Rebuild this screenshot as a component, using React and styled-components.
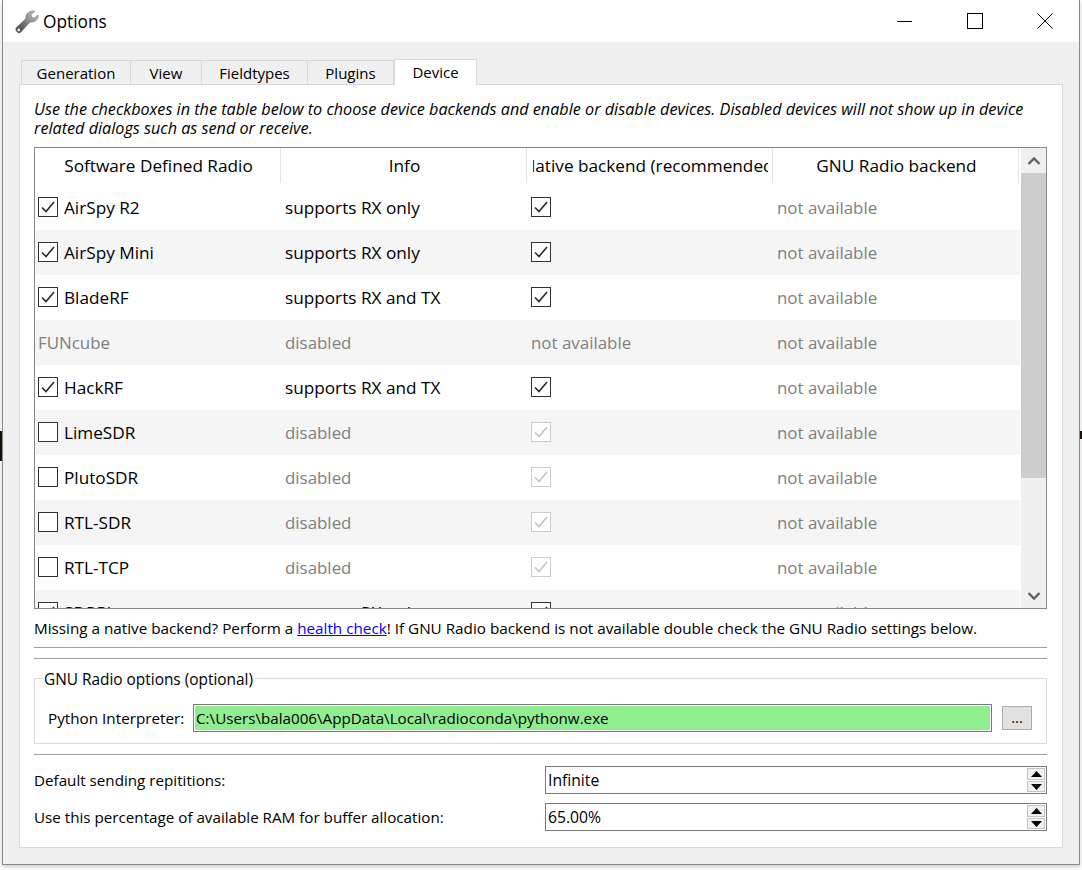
import React from 'react';
import styled, { createGlobalStyle } from 'styled-components';

const GlobalStyle = createGlobalStyle`
  html, body {
    margin: 0;
    background: #fff;
  }
  body {
    font-family: "Open Sans", "Noto Sans", sans-serif;
    font-size: 16px;
    color: #000;
  }
`;

const Page = styled.div`
  width: 1082px;
  height: 870px;
  overflow: hidden;
  padding-left: 2px;
  box-sizing: border-box;
  position: relative;
`;

const BehindMark = styled.div`
  position: absolute;
  top: 431px;
  ${(p) => (p.$right ? 'right: 0;' : 'left: 0;')}
  width: 2px;
  height: ${(p) => (p.$right ? 8 : 30)}px;
  background: #1a1208;
`;

const Win = styled.div`
  width: 1078px;
  height: 865px;
  box-sizing: border-box;
  background: #f0f0f0;
  border: 1px solid #8a8a8a;
  border-top: 0;
  box-shadow: 0 2px 4px rgba(0, 0, 0, 0.2);
`;

const TitleBar = styled.div`
  height: 42px;
  background: #fff;
  display: flex;
  align-items: center;
  padding-left: 11px;
`;

const Title = styled.span`
  font-size: 17.3px;
  margin-left: 3px;
  flex: 1;
`;

const WinButton = styled.div`
  box-sizing: border-box;
  width: 70px;
  height: 42px;
  padding-left: 2px;
  display: flex;
  align-items: center;
  justify-content: center;
`;

const Tabs = styled.div`
  display: flex;
  align-items: flex-end;
  height: 42px;
  padding-left: 18px;
  position: relative;
  z-index: 1;
`;

const Tab = styled.div`
  box-sizing: border-box;
  width: ${(p) => p.$w}px;
  height: ${(p) => (p.$active ? 26 : 24)}px;
  margin-bottom: ${(p) => (p.$active ? -1 : 0)}px;
  padding: ${(p) => (p.$active ? '0 0 2px' : '1px 0 0')};
  background: ${(p) => (p.$active ? '#fff' : '#f0f0f0')};
  border: 1px solid #d9d9d9;
  border-left-width: ${(p) => (p.$first || p.$active ? 1 : 0)}px;
  border-bottom: 0;
  display: flex;
  align-items: center;
  justify-content: center;
  font-size: 15px;
`;

const Pane = styled.div`
  box-sizing: border-box;
  width: 1044px;
  height: 764px;
  margin-left: 16px;
  background: #fff;
  border: 1px solid #d9d9d9;
  padding: 15px 15px 0 14px;
`;

const Intro = styled.div`
  font-style: italic;
  font-size: 16.2px;
  line-height: 19px;
  width: 1000px;
`;

const TableFrame = styled.div`
  box-sizing: border-box;
  margin-top: 9px;
  width: 1013px;
  height: 462px;
  border: 1px solid #828790;
  display: flex;
  overflow: hidden;
`;

const TableBody = styled.div`
  width: 985px;
  flex: none;
  overflow: hidden;
`;

const HeaderRow = styled.div`
  display: grid;
  grid-template-columns: repeat(4, 246px);
  height: 37px;
`;

const HeaderCell = styled.div`
  height: 35px;
  padding: 0 4px 0 6px;
  border-right: 1px solid #e5e5e5;
  box-sizing: border-box;
  min-width: 0;
`;

const HeaderClip = styled.div`
  height: 100%;
  overflow: hidden;
  white-space: nowrap;
  display: flex;
  justify-content: center;
  align-items: center;
  font-size: 17.2px;
`;

const Row = styled.div`
  display: grid;
  grid-template-columns: repeat(4, 246px);
  height: 45px;
  background: ${(p) => (p.$alt ? '#f5f5f5' : '#fff')};
`;

const Cell = styled.div`
  display: flex;
  align-items: center;
  gap: 6px;
  padding-left: ${(p) => (p.$pad === undefined ? 3 : p.$pad)}px;
  color: ${(p) => (p.$muted ? '#808080' : '#000')};
  font-size: ${(p) => (p.$muted ? 16.9 : 17.2)}px;
  white-space: nowrap;
`;

const Box = styled.span`
  box-sizing: border-box;
  width: 20px;
  height: 20px;
  flex: none;
  margin-bottom: 2px;
  border: 1px solid ${(p) => (p.$dim ? '#cccccc' : '#333333')};
  background: #fff;
  display: flex;
  align-items: center;
  justify-content: center;
`;

const ScrollBar = styled.div`
  flex: 1;
  display: flex;
  flex-direction: column;
  background: #f0f0f0;
  margin-left: 1px;
`;

const ScrollArrow = styled.div`
  height: 25px;
  display: flex;
  align-items: center;
  justify-content: center;
  flex: none;
`;

const ScrollThumb = styled.div`
  height: 305px;
  background: #cdcdcd;
  flex: none;
`;

const ScrollGap = styled.div`
  flex: 1;
`;

const Note = styled.div`
  font-size: 15.25px;
  line-height: 20px;
  margin-top: 9px;
  white-space: nowrap;
`;

const Link = styled.a`
  color: #0000ff;
  text-decoration: underline;
`;

const Rule = styled.div`
  width: 1013px;
  height: 1px;
  background: #a0a0a0;
  margin-top: ${(p) => p.$top}px;
`;

const Group = styled.fieldset`
  box-sizing: border-box;
  width: 1013px;
  height: 76px;
  margin: 9px 0 0;
  padding: 0 13px 0;
  border: 1px solid #dcdcdc;
  display: flex;
  align-items: center;
`;

const GroupTitle = styled.legend`
  font-size: 15.4px;
  line-height: 18px;
  padding: 3px 2px 0 1px;
  margin-left: -5px;
`;

const GroupRow = styled.div`
  display: flex;
  align-items: center;
  margin-top: 3px;
`;

const PathLabel = styled.span`
  font-size: 15.25px;
  width: 145px;
  flex: none;
`;

const PathInput = styled.div`
  box-sizing: border-box;
  width: 799px;
  height: 28px;
  background: #90ee90;
  border: 1px solid #7a7a7a;
  box-shadow: inset 0 0 0 1px #fff;
  padding-left: 2px;
  font-size: 15.2px;
  line-height: 26px;
  white-space: nowrap;
`;

const BrowseButton = styled.div`
  box-sizing: border-box;
  width: 30px;
  height: 24px;
  margin-left: 10px;
  background: #e1e1e1;
  border: 1px solid #adadad;
  display: flex;
  align-items: center;
  justify-content: center;
  font-size: 14.5px;
`;

const SpinRow = styled.div`
  display: flex;
  align-items: center;
  width: 1013px;
  margin-top: ${(p) => p.$top}px;
`;

const SpinLabel = styled.span`
  font-size: 15.2px;
  width: 511px;
  flex: none;
`;

const Spin = styled.div`
  box-sizing: border-box;
  width: 502px;
  height: 28px;
  border: 1px solid #7a7a7a;
  display: flex;
  align-items: center;
  padding-left: 2px;
  font-size: 15.7px;
`;

const SpinValue = styled.span`
  flex: 1;
`;

const SpinArrows = styled.div`
  width: 18px;
  margin-right: 1px;
  display: flex;
  flex-direction: column;
  gap: 1px;
`;

const SpinArrow = styled.div`
  height: ${(p) => (p.$up ? 12 : 11)}px;
  background: #f0f0f0;
  border: 1px solid #c4c4c4;
  box-sizing: border-box;
  display: flex;
  align-items: center;
  justify-content: center;
`;

const Tick = ({ dim }) => (
  <svg width="14" height="12" viewBox="0 0 14 12" fill="none">
    <path d="M1 6.5 L5 10.5 L13 1" stroke={dim ? '#c4c4c4' : '#2a2a2a'} strokeWidth="1.6" />
  </svg>
);

const Check = ({ on, dim }) => <Box $dim={dim}>{on && <Tick dim={dim} />}</Box>;

const Wrench = () => (
  <svg width="26" height="26" viewBox="0 0 26 26">
    <defs>
      <linearGradient id="wr" x1="0" y1="1" x2="1" y2="0">
        <stop offset="0" stopColor="#3c3c3c" />
        <stop offset="0.45" stopColor="#7a7a7a" />
        <stop offset="1" stopColor="#d4d4d4" />
      </linearGradient>
    </defs>
    <path
      d="M2 20 L12 10.5 C11.5 7 13.5 3.5 19 3 L20.5 3.5 L17 6.5 L17.5 9.5 L20.5 10 L24 7 C24.5 11 21.5 14.5 16 14 L6.5 24.5 C4.5 26 1 23 2 20 Z"
      fill="url(#wr)"
      stroke="#666"
      strokeWidth="0.6"
    />
    <circle cx="4.8" cy="22" r="1.4" fill="#eee" />
  </svg>
);

const SpinButtons = () => (
  <SpinArrows>
    <SpinArrow $up>
      <svg width="11" height="6" viewBox="0 0 11 6">
        <path d="M5.5 0 L11 6 H0 Z" fill="#000" />
      </svg>
    </SpinArrow>
    <SpinArrow>
      <svg width="11" height="6" viewBox="0 0 11 6">
        <path d="M0 0 H11 L5.5 6 Z" fill="#000" />
      </svg>
    </SpinArrow>
  </SpinArrows>
);

const devices = [
  { name: 'AirSpy R2', on: true, info: 'supports RX only', native: 'on' },
  { name: 'AirSpy Mini', on: true, info: 'supports RX only', native: 'on' },
  { name: 'BladeRF', on: true, info: 'supports RX and TX', native: 'on' },
  { name: 'FUNcube', noBox: true, info: 'disabled', native: 'none' },
  { name: 'HackRF', on: true, info: 'supports RX and TX', native: 'on' },
  { name: 'LimeSDR', info: 'disabled', native: 'dim' },
  { name: 'PlutoSDR', info: 'disabled', native: 'dim' },
  { name: 'RTL-SDR', info: 'disabled', native: 'dim' },
  { name: 'RTL-TCP', info: 'disabled', native: 'dim' },
  { name: 'SDRPlay', on: true, info: 'supports RX only', native: 'on' },
];

const tabs = [
  { label: 'Generation', w: 110, first: true },
  { label: 'View', w: 71 },
  { label: 'Fieldtypes', w: 106 },
  { label: 'Plugins', w: 86 },
  { label: 'Device', w: 83, active: true },
];

const headers = ['Software Defined Radio', 'Info', 'Native backend (recommended)', 'GNU Radio backend'];

export default function App() {
  return (
    <Page>
      <GlobalStyle />
      <BehindMark />
      <BehindMark $right />
      <Win>
        <TitleBar>
          <Wrench />
          <Title>Options</Title>
          <WinButton>
            <svg width="16" height="16" viewBox="0 0 16 16">
              <path d="M0 8.5 H15" stroke="#000" strokeWidth="1" />
            </svg>
          </WinButton>
          <WinButton>
            <svg width="16" height="16" viewBox="0 0 16 16" fill="none">
              <rect x="0.5" y="0.5" width="15" height="15" stroke="#000" />
            </svg>
          </WinButton>
          <WinButton>
            <svg width="16" height="16" viewBox="0 0 16 16">
              <path d="M0.5 0.5 L15.5 15.5 M15.5 0.5 L0.5 15.5" stroke="#000" strokeWidth="1" />
            </svg>
          </WinButton>
        </TitleBar>
        <Tabs>
          {tabs.map((t) => (
            <Tab key={t.label} $w={t.w} $first={t.first} $active={t.active}>
              {t.label}
            </Tab>
          ))}
        </Tabs>
        <Pane>
          <Intro>
            Use the checkboxes in the table below to choose device backends and enable or disable
            devices. Disabled devices will not show up in device related dialogs such as send or
            receive.
          </Intro>
          <TableFrame>
            <TableBody>
              <HeaderRow>
                {headers.map((h) => (
                  <HeaderCell key={h}>
                    <HeaderClip>{h}</HeaderClip>
                  </HeaderCell>
                ))}
              </HeaderRow>
              {devices.map((d, i) => (
                <Row key={d.name} $alt={i % 2 === 1}>
                  <Cell $muted={d.noBox}>
                    {!d.noBox && <Check on={d.on} />}
                    {d.name}
                  </Cell>
                  <Cell $muted={d.info === 'disabled'} $pad={4}>
                    {d.info}
                  </Cell>
                  <Cell $muted={d.native === 'none'} $pad={4}>
                    {d.native === 'none' ? 'not available' : <Check on dim={d.native === 'dim'} />}
                  </Cell>
                  <Cell $muted $pad={4}>
                    not available
                  </Cell>
                </Row>
              ))}
            </TableBody>
            <ScrollBar>
              <ScrollArrow>
                <svg width="14" height="10" viewBox="0 0 14 10" fill="none">
                  <path d="M1.5 8 L7 2.5 L12.5 8" stroke="#606060" strokeWidth="2.4" />
                </svg>
              </ScrollArrow>
              <ScrollThumb />
              <ScrollGap />
              <ScrollArrow>
                <svg width="14" height="10" viewBox="0 0 14 10" fill="none">
                  <path d="M1.5 2 L7 7.5 L12.5 2" stroke="#606060" strokeWidth="2.4" />
                </svg>
              </ScrollArrow>
            </ScrollBar>
          </TableFrame>
          <Note>
            Missing a native backend? Perform a <Link href="#">health check</Link>! If GNU Radio
            backend is not available double check the GNU Radio settings below.
          </Note>
          <Rule $top={9} />
          <Rule $top={10} />
          <Group>
            <GroupTitle>GNU Radio options (optional)</GroupTitle>
            <GroupRow>
              <PathLabel>Python Interpreter:</PathLabel>
              <PathInput>C:\Users\bala006\AppData\Local\radioconda\pythonw.exe</PathInput>
              <BrowseButton>...</BrowseButton>
            </GroupRow>
          </Group>
          <Rule $top={10} />
          <SpinRow $top={11}>
            <SpinLabel>Default sending repititions:</SpinLabel>
            <Spin>
              <SpinValue>Infinite</SpinValue>
              <SpinButtons />
            </Spin>
          </SpinRow>
          <SpinRow $top={9}>
            <SpinLabel>Use this percentage of available RAM for buffer allocation:</SpinLabel>
            <Spin>
              <SpinValue>65.00%</SpinValue>
              <SpinButtons />
            </Spin>
          </SpinRow>
        </Pane>
      </Win>
    </Page>
  );
}
